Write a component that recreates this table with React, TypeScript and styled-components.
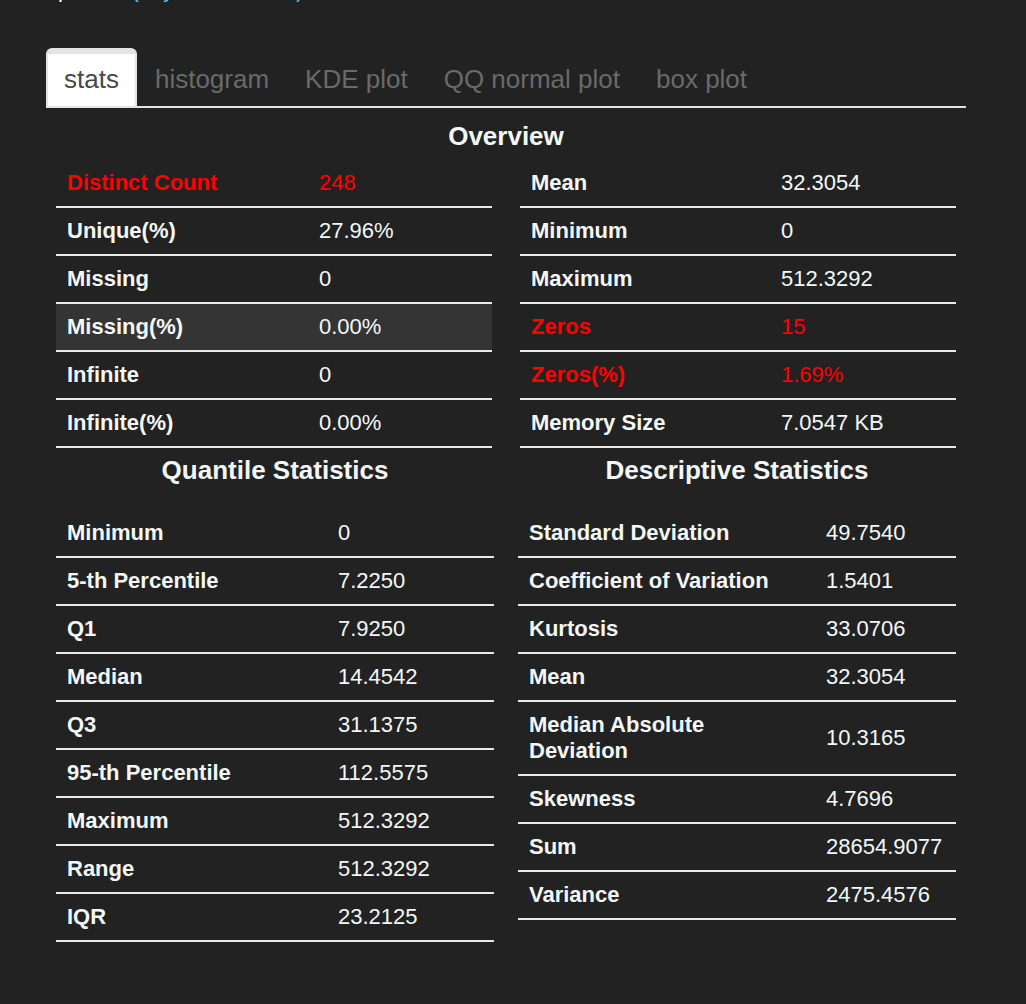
import React from "react";
import styled, { createGlobalStyle } from "styled-components";

const Global = createGlobalStyle`
  html, body { margin: 0; padding: 0; background: #222222; }
  body { font-family: "Liberation Sans", Arial, Helvetica, sans-serif; color: #f3f8f8; }
`;

const Page = styled.div`
  padding: 0 60px 0 46px;
  width: 920px;
`;

const CodeLine = styled.div`
  font-size: 22px;
  line-height: 26px;
  margin-top: -23px;
  padding-left: 12px;
  white-space: pre;
  height: 26px;
`;

const Tok = styled.span<{ $c: string }>`
  color: ${(p) => p.$c};
`;

const TabBar = styled.div`
  margin-top: 45px;
  display: flex;
  align-items: flex-end;
  border-bottom: 2px solid #e4e4e4;
`;

const Tab = styled.div<{ $active?: boolean }>`
  font-size: 26px;
  line-height: 30px;
  padding: 10px 16px 12px;
  border: 2px solid transparent;
  border-top-width: 6px;
  border-bottom: none;
  border-radius: 6px 6px 0 0;
  color: ${(p) => (p.$active ? "#484848" : "#6a6a6a")};
  background: ${(p) => (p.$active ? "#ffffff" : "transparent")};
  border-color: ${(p) => (p.$active ? "#e4e4e4" : "transparent")};
`;

const Heading = styled.div<{ $top: number; $bottom: number }>`
  font-size: 26px;
  font-weight: bold;
  line-height: 28px;
  text-align: center;
  padding-top: ${(p) => p.$top}px;
  padding-bottom: ${(p) => p.$bottom}px;
`;

const Content = styled.div`
  padding: 0 10px;
`;

const Columns = styled.div<{ $gap: number }>`
  display: grid;
  grid-template-columns: 1fr 1fr;
  column-gap: ${(p) => p.$gap}px;
  align-items: start;
`;

const Section = styled.div``;

const Table = styled.div``;

const Row = styled.div<{ $label: number; $hl?: boolean; $red?: boolean }>`
  display: grid;
  grid-template-columns: ${(p) => p.$label}px 1fr;
  align-items: center;
  border-bottom: 2px solid #e9e9e9;
  background: ${(p) => (p.$hl ? "#343434" : "transparent")};
  color: ${(p) => (p.$red ? "#ff0000" : "#f3f8f8")};
  font-size: 22px;
  line-height: 26px;
`;

const Label = styled.div`
  font-weight: bold;
  padding: 10px 11px;
`;

const Value = styled.div`
  padding: 10px 11px;
`;

type Item = [string, string, { red?: boolean; hl?: boolean }?];

const StatTable = ({ rows, label }: { rows: Item[]; label: number }) => (
  <Table>
    {rows.map(([l, v, o]) => (
      <Row key={l} $label={label} $red={o?.red} $hl={o?.hl}>
        <Label>{l}</Label>
        <Value>{v}</Value>
      </Row>
    ))}
  </Table>
);

const overviewLeft: Item[] = [
  ["Distinct Count", "248", { red: true }],
  ["Unique(%)", "27.96%"],
  ["Missing", "0"],
  ["Missing(%)", "0.00%", { hl: true }],
  ["Infinite", "0"],
  ["Infinite(%)", "0.00%"],
];

const overviewRight: Item[] = [
  ["Mean", "32.3054"],
  ["Minimum", "0"],
  ["Maximum", "512.3292"],
  ["Zeros", "15", { red: true }],
  ["Zeros(%)", "1.69%", { red: true }],
  ["Memory Size", "7.0547 KB"],
];

const quantile: Item[] = [
  ["Minimum", "0"],
  ["5-th Percentile", "7.2250"],
  ["Q1", "7.9250"],
  ["Median", "14.4542"],
  ["Q3", "31.1375"],
  ["95-th Percentile", "112.5575"],
  ["Maximum", "512.3292"],
  ["Range", "512.3292"],
  ["IQR", "23.2125"],
];

const descriptive: Item[] = [
  ["Standard Deviation", "49.7540"],
  ["Coefficient of Variation", "1.5401"],
  ["Kurtosis", "33.0706"],
  ["Mean", "32.3054"],
  ["Median Absolute Deviation", "10.3165"],
  ["Skewness", "4.7696"],
  ["Sum", "28654.9077"],
  ["Variance", "2475.4576"],
];

export default function App() {
  return (
    <>
      <Global />
      <Page>
        <CodeLine>
          <Tok $c="#ffffff">p</Tok>
          <Tok $c="#9a9a9a">lot.bar</Tok>
          <Tok $c="#5cc6f7">(</Tok>
          <Tok $c="#9a9a9a">df.</Tok>
          <Tok $c="#5cc6f7">y</Tok>
          <Tok $c="#9a9a9a">=x123</Tok>
          <Tok $c="#a3b86c">,</Tok>
          <Tok $c="#9a9a9a"> 45</Tok>
          <Tok $c="#a3b86c">,</Tok>
          <Tok $c="#9a9a9a"> 1</Tok>
          <Tok $c="#5cc6f7">)</Tok>
        </CodeLine>
        <TabBar>
          <Tab $active>stats</Tab>
          <Tab>histogram</Tab>
          <Tab>KDE plot</Tab>
          <Tab>QQ normal plot</Tab>
          <Tab>box plot</Tab>
        </TabBar>
        <Heading $top={14} $bottom={10}>Overview</Heading>
        <Content>
          <Columns $gap={28}>
            <StatTable rows={overviewLeft} label={252} />
            <StatTable rows={overviewRight} label={250} />
          </Columns>
          <Columns $gap={24}>
            <Section>
              <Heading $top={8} $bottom={26}>Quantile Statistics</Heading>
              <StatTable rows={quantile} label={271} />
            </Section>
            <Section>
              <Heading $top={8} $bottom={26}>Descriptive Statistics</Heading>
              <StatTable rows={descriptive} label={297} />
            </Section>
          </Columns>
        </Content>
      </Page>
    </>
  );
}
